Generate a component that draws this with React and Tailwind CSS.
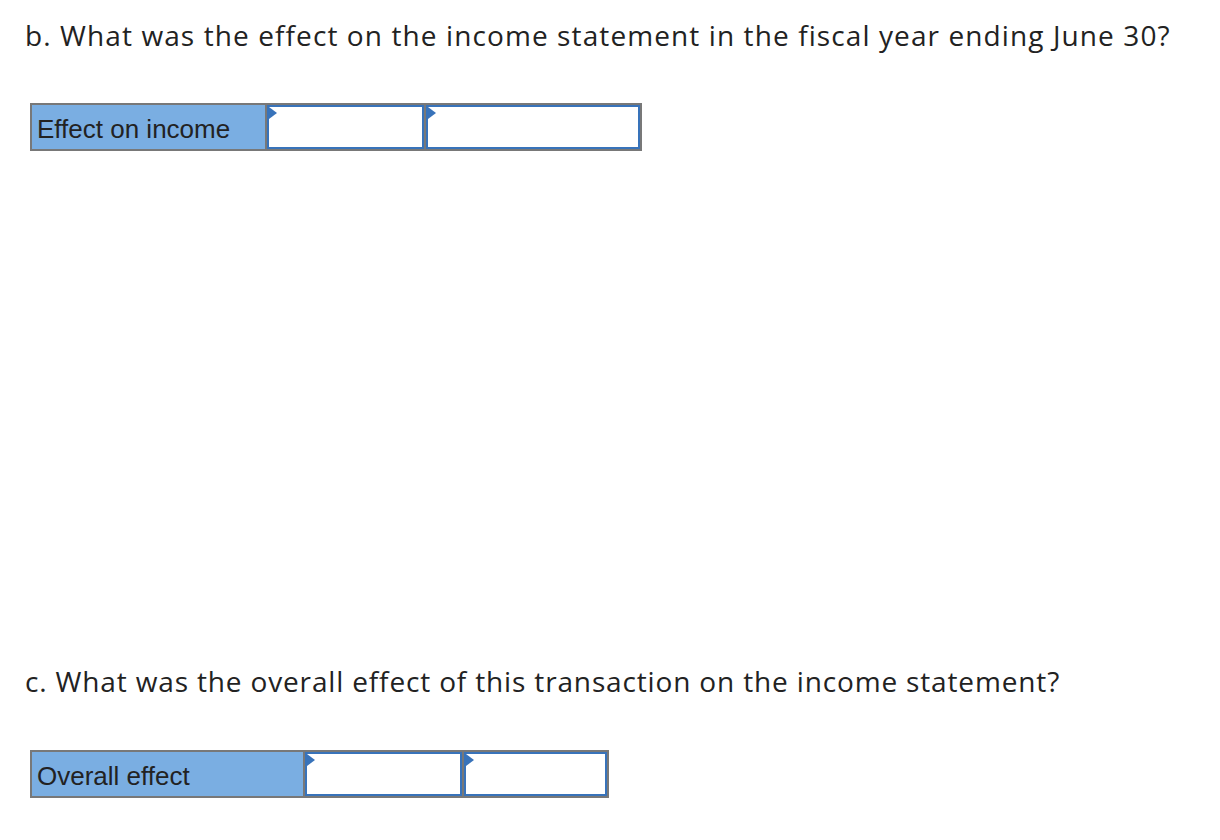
import React from "react";

function InputCell({ w }) {
  return (
    <div className={`relative h-full bg-white border-2 border-[#3873ba] ${w}`}>
      <div className="absolute left-0 top-0 w-0 h-0 border-t-[6px] border-b-[6px] border-l-[8px] border-t-transparent border-b-transparent border-l-[#3873ba]" />
    </div>
  );
}

function Row({ label, labelW, w1, w2 }) {
  return (
    <div className="flex h-[48px] w-fit gap-[2px] bg-[#787878] p-[2px]">
      <div
        className={`flex h-full items-center bg-[#7aaee2] pl-[5px] pt-[5px] text-[26px] tracking-normal text-[#222] ${labelW}`}
        style={{ fontFamily: '"Liberation Sans", Arial, sans-serif' }}
      >
        {label}
      </div>
      <InputCell w={w1} />
      <InputCell w={w2} />
    </div>
  );
}

export default function App() {
  return (
    <div
      className="min-h-screen bg-white pl-[25px] pt-[16px] text-[#222]"
      style={{ fontFamily: '"Open Sans", Lato, sans-serif', fontVariantLigatures: "none" }}
    >
      <p className="text-[28px] leading-[38px] tracking-[1.1px]">
        b. What was the effect on the income statement in the fiscal year ending June 30?
      </p>
      <div className="mt-[49px] ml-[5px]">
        <Row label="Effect on income" labelW="w-[233px]" w1="w-[157px]" w2="w-[214px]" />
      </div>
      <p className="mt-[511px] text-[28px] leading-[38px] tracking-[0.85px]">
        c. What was the overall effect of this transaction on the income statement?
      </p>
      <div className="mt-[50px] ml-[5px]">
        <Row label="Overall effect" labelW="w-[271px]" w1="w-[157px]" w2="w-[143px]" />
      </div>
    </div>
  );
}
